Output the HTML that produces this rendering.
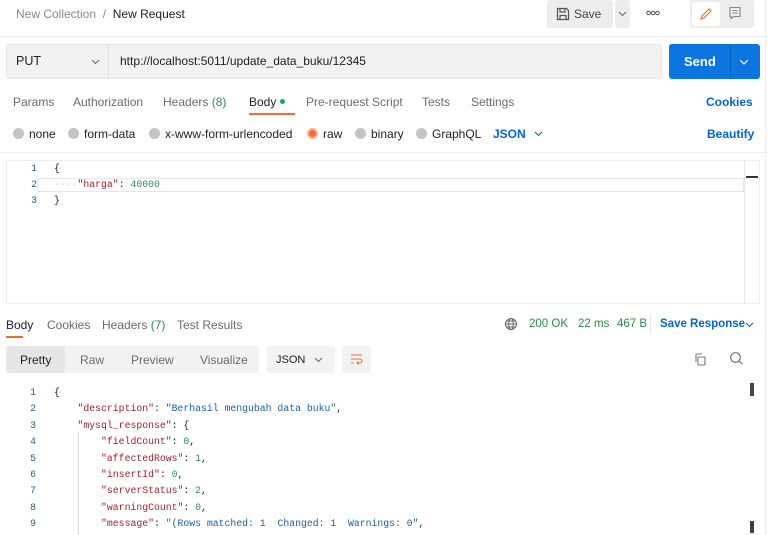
<!DOCTYPE html>
<html><head><meta charset="utf-8"><style>
*{margin:0;padding:0;box-sizing:border-box}
body{width:768px;height:535px;overflow:hidden;background:#fff;font-family:"Liberation Sans",sans-serif;font-size:12px;color:#212121;position:relative}
.a{position:absolute;white-space:nowrap}
.mono{font-family:"Liberation Mono",monospace;font-size:9.8px}
.g{color:#6b6b6b}
.blue{color:#0265d2}
.radio{display:inline-block;width:11px;height:11px;border-radius:50%;background:#c4c4c4;vertical-align:-1px;margin-right:5px}
.ln{color:#2a5f8c;text-align:right;width:20px}
.k{color:#a3222b}.s{color:#1c5fa8}.n{color:#2c8a6e}
</style></head><body>
<div class="a" style="left:16px;top:7px;font-size:12px"><span style="color:#8a8a8a">New Collection</span> <span style="color:#8a8a8a">&nbsp;/&nbsp;</span> <span style="color:#212121">New Request</span></div>
<div class="a" style="left:547px;top:0;width:66px;height:28px;background:#ededed;border-radius:3px"></div>
<svg class="a" style="left:556px;top:7px" width="14" height="14" viewBox="0 0 14 14" fill="none" stroke="#555" stroke-width="1.2"><path d="M1.5 1.5h9l2 2v9h-11z M4 1.5v3.5h5v-3.5 M4 12.5v-4h6v4"/></svg>
<div class="a" style="left:574px;top:7px;color:#444">Save</div>
<div class="a" style="left:615px;top:0;width:15px;height:28px;background:#ededed;border-radius:3px"></div>
<svg class="a" style="left:618px;top:11px" width="9" height="6" viewBox="0 0 9 6" fill="none" stroke="#666" stroke-width="1"><path d="M1 1l3.5 3.5L8 1"/></svg>
<svg class="a" style="left:646px;top:10px" width="14" height="6" viewBox="0 0 14 6" fill="none" stroke="#555" stroke-width="1"><circle cx="2.5" cy="3" r="1.8"/><circle cx="7" cy="3" r="1.8"/><circle cx="11.5" cy="3" r="1.8"/></svg>
<div class="a" style="left:690px;top:0;width:64px;height:28px;background:#ededed;border-radius:3px"></div>
<div class="a" style="left:692px;top:2px;width:28px;height:24px;background:#fff;border-radius:3px"></div>
<svg class="a" style="left:699px;top:7px" width="14" height="14" viewBox="0 0 14 14" fill="none" stroke="#e8743b" stroke-width="1.2"><path d="M2 12l1-3 7-7 2 2-7 7z"/></svg>
<svg class="a" style="left:728px;top:6px" width="14" height="14" viewBox="0 0 14 14" fill="none" stroke="#888" stroke-width="1.1"><path d="M2 1.5h10v9h-6l-3 2v-2h-1z M4.5 4.5h5 M4.5 7h5"/></svg>
<div class="a" style="left:0;top:36px;width:768px;height:1px;background:#eee"></div>
<div class="a" style="left:765px;top:0;width:1px;height:535px;background:#eaeaea"></div>

<div class="a" style="left:6px;top:44px;width:656px;height:35px;background:#f2f2f2;border:1px solid #e6e6e6;border-radius:3px"></div>
<div class="a" style="left:108px;top:44px;width:1px;height:35px;background:#e0e0e0"></div>
<div class="a" style="left:16px;top:54px;font-size:12.5px">PUT</div>
<svg class="a" style="left:91px;top:59px" width="9" height="6" viewBox="0 0 9 6" fill="none" stroke="#666" stroke-width="1"><path d="M1 1l3.5 3.5L8 1"/></svg>
<div class="a" style="left:120px;top:54px;font-size:12px">http://localhost:5011/update_data_buku/12345</div>
<div class="a" style="left:669px;top:44px;width:91px;height:35px;background:#0b75e0;border-radius:3px"></div>
<div class="a" style="left:730px;top:44px;width:1px;height:35px;background:#0a62bd"></div>
<div class="a" style="left:684px;top:54px;color:#fff;font-weight:bold;font-size:13px">Send</div>
<svg class="a" style="left:739px;top:59px" width="10" height="6" viewBox="0 0 10 6" fill="none" stroke="#fff" stroke-width="1.2"><path d="M1 1l4 4 4-4"/></svg>

<div class="a g" style="left:13px;top:95px">Params</div>
<div class="a g" style="left:73px;top:95px">Authorization</div>
<div class="a g" style="left:163px;top:95px">Headers <span style="color:#2c8a4e">(8)</span></div>
<div class="a" style="left:249px;top:95px">Body</div>
<div class="a" style="left:280px;top:99px;width:5px;height:5px;border-radius:50%;background:#1aa650"></div>
<div class="a" style="left:249px;top:113px;width:46px;height:2px;background:#f26b3a"></div>
<div class="a g" style="left:306px;top:95px">Pre-request Script</div>
<div class="a g" style="left:422px;top:95px">Tests</div>
<div class="a g" style="left:471px;top:95px">Settings</div>
<div class="a blue" style="left:706px;top:95px;font-weight:bold">Cookies</div>

<div class="a" style="left:13px;top:127px"><span class="radio"></span>none</div>
<div class="a" style="left:68px;top:127px"><span class="radio"></span>form-data</div>
<div class="a" style="left:149px;top:127px"><span class="radio"></span>x-www-form-urlencoded</div>
<div class="a" style="left:307px;top:127px"><span class="radio" style="background:#f26b3a;box-shadow:inset 0 0 0 2px #f9b89c"></span>raw</div>
<div class="a" style="left:355px;top:127px"><span class="radio"></span>binary</div>
<div class="a" style="left:416px;top:127px"><span class="radio"></span>GraphQL</div>
<div class="a blue" style="left:493px;top:127px;font-weight:bold">JSON</div>
<svg class="a" style="left:534px;top:131px" width="9" height="6" viewBox="0 0 9 6" fill="none" stroke="#0265d2" stroke-width="1.1"><path d="M1 1l3.5 3.5L8 1"/></svg>
<div class="a blue" style="left:707px;top:127px;font-weight:bold">Beautify</div>

<div class="a" style="left:0;top:152px;width:768px;height:1px;background:#eee"></div>
<div class="a" style="left:6px;top:160px;width:754px;height:144px;border:1px solid #eee"></div>
<div class="a" style="left:744px;top:160px;width:1px;height:144px;background:#e6e6e6"></div>
<div class="a" style="left:746px;top:176px;width:12px;height:2px;background:#333"></div>
<div class="a" style="left:37px;top:178px;width:707px;height:14px;border:1px solid #e6e6e6"></div>
<div class="a mono ln" style="left:17px;top:163px">1</div>
<div class="a mono ln" style="left:17px;top:179px">2</div>
<div class="a mono ln" style="left:17px;top:195px">3</div>
<div class="a mono" style="left:54px;top:163px">{</div>
<div class="a mono" style="left:54px;top:179px"><span style="color:#ccc">····</span><span class="k">"harga"</span>: <span class="n">40000</span></div>
<div class="a mono" style="left:54px;top:195px">}</div>

<div class="a" style="left:6px;top:318px">Body</div>
<div class="a" style="left:6px;top:336px;width:17px;height:2px;background:#f26b3a"></div>
<div class="a g" style="left:47px;top:318px">Cookies</div>
<div class="a g" style="left:102px;top:318px">Headers <span style="color:#2c8a4e">(7)</span></div>
<div class="a g" style="left:177px;top:318px">Test Results</div>
<svg class="a" style="left:504px;top:317px" width="14" height="14" viewBox="0 0 14 14" fill="none" stroke="#666" stroke-width="1"><circle cx="7" cy="7" r="5.5"/><ellipse cx="7" cy="7" rx="2.3" ry="5.5"/><path d="M1.5 7h11 M2.5 4h9 M2.5 10h9"/></svg>
<div class="a" style="left:529px;top:318px;color:#2c8a4e;font-size:11.5px">200 OK</div>
<div class="a" style="left:578px;top:318px;color:#2c8a4e;font-size:11.5px">22 ms</div>
<div class="a" style="left:617px;top:318px;color:#2c8a4e;font-size:11.5px">467 B</div>
<div class="a" style="left:650px;top:314px;width:1px;height:20px;background:#e6e6e6"></div>
<div class="a blue" style="left:660px;top:318px;font-weight:bold;font-size:11.5px">Save Response</div>
<svg class="a" style="left:745px;top:322px" width="9" height="6" viewBox="0 0 9 6" fill="none" stroke="#0265d2" stroke-width="1.1"><path d="M1 1l3.5 3.5L8 1"/></svg>

<div class="a" style="left:6px;top:346px;width:253px;height:27px;background:#f2f2f2;border-radius:3px"></div>
<div class="a" style="left:6px;top:346px;width:59px;height:27px;background:#e6e6e6;border-radius:3px 0 0 3px"></div>
<div class="a" style="left:20px;top:353px">Pretty</div>
<div class="a g" style="left:80px;top:353px">Raw</div>
<div class="a g" style="left:131px;top:353px">Preview</div>
<div class="a g" style="left:200px;top:353px">Visualize</div>
<div class="a" style="left:267px;top:346px;width:68px;height:27px;background:#f2f2f2;border-radius:3px"></div>
<div class="a" style="left:276px;top:354px;font-size:11px">JSON</div>
<svg class="a" style="left:314px;top:357px" width="9" height="6" viewBox="0 0 9 6" fill="none" stroke="#666" stroke-width="1"><path d="M1 1l3.5 3.5L8 1"/></svg>
<div class="a" style="left:342px;top:346px;width:29px;height:27px;background:#f2f2f2;border-radius:3px"></div>
<svg class="a" style="left:349px;top:352px" width="15" height="15" viewBox="0 0 15 15" fill="none" stroke="#e8743b" stroke-width="1.1"><path d="M2 3h11 M2 7h9a2 2 0 010 4h-3 M9.5 9.5l-1.5 1.5 1.5 1.5 M2 11h3"/></svg>
<svg class="a" style="left:693px;top:352px" width="15" height="15" viewBox="0 0 15 15" fill="none" stroke="#777" stroke-width="1.1"><rect x="5" y="5" width="7" height="8" rx="1"/><path d="M3 10V3a1 1 0 011-1h5"/></svg>
<svg class="a" style="left:729px;top:351px" width="15" height="15" viewBox="0 0 15 15" fill="none" stroke="#777" stroke-width="1.2"><circle cx="6.5" cy="6.5" r="4.8"/><path d="M10 10l3.5 3.5"/></svg>

<div class="a" style="left:750px;top:383px;width:4px;height:13px;background:#444"></div>
<div class="a" style="left:750px;top:521px;width:4px;height:12px;background:#444"></div>
<div class="a" style="left:78px;top:431px;width:1px;height:104px;background:#ddd"></div>
<div class="a mono" style="left:0;top:385px;line-height:16.4px">
<div class="ln" style="margin-left:16px">1<br>2<br>3<br>4<br>5<br>6<br>7<br>8<br>9</div>
</div>
<div class="a mono" style="left:54px;top:385px;line-height:16.4px">
<div>{</div>
<div>&nbsp;&nbsp;&nbsp;&nbsp;<span class="k">"description"</span>: <span class="s">"Berhasil mengubah data buku"</span>,</div>
<div>&nbsp;&nbsp;&nbsp;&nbsp;<span class="k">"mysql_response"</span>: {</div>
<div>&nbsp;&nbsp;&nbsp;&nbsp;&nbsp;&nbsp;&nbsp;&nbsp;<span class="k">"fieldCount"</span>: <span class="n">0</span>,</div>
<div>&nbsp;&nbsp;&nbsp;&nbsp;&nbsp;&nbsp;&nbsp;&nbsp;<span class="k">"affectedRows"</span>: <span class="n">1</span>,</div>
<div>&nbsp;&nbsp;&nbsp;&nbsp;&nbsp;&nbsp;&nbsp;&nbsp;<span class="k">"insertId"</span>: <span class="n">0</span>,</div>
<div>&nbsp;&nbsp;&nbsp;&nbsp;&nbsp;&nbsp;&nbsp;&nbsp;<span class="k">"serverStatus"</span>: <span class="n">2</span>,</div>
<div>&nbsp;&nbsp;&nbsp;&nbsp;&nbsp;&nbsp;&nbsp;&nbsp;<span class="k">"warningCount"</span>: <span class="n">0</span>,</div>
<div>&nbsp;&nbsp;&nbsp;&nbsp;&nbsp;&nbsp;&nbsp;&nbsp;<span class="k">"message"</span>: <span class="s">"(Rows matched: 1&nbsp;&nbsp;Changed: 1&nbsp;&nbsp;Warnings: 0"</span>,</div>
</div>
</body></html>
